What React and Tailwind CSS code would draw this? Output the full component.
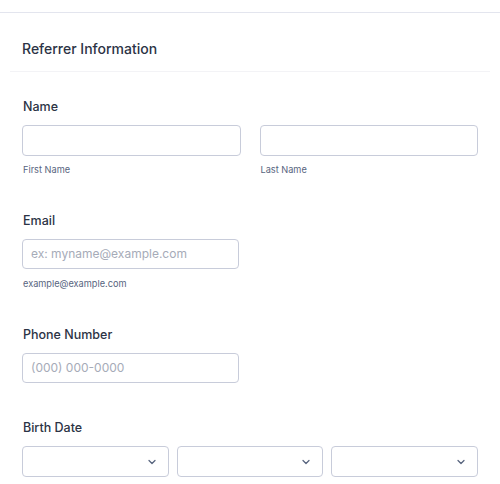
import { ChevronDown } from 'lucide-react';

function DateSelect() {
  return (
    <div className="relative h-[31px] rounded-[4px] border border-[#c8ccda] bg-white">
      <ChevronDown className="absolute right-[10px] top-[9px] w-[12px] h-[12px] text-[#57647e]" strokeWidth={2.5} />
    </div>
  );
}

export default function App() {
  return (
    <div className="min-h-screen bg-white font-['Inter',sans-serif] text-[#2c3345]">
      <div className="h-[13px] border-b border-[#e3e5ee]" />

      {/* header */}
      <div className="mx-[10px] border-b border-[#f3f3f6] px-[12px] pt-[26px] pb-[12px]">
        <h2 className="text-[14px] font-medium leading-[20px]">Referrer Information</h2>
      </div>

      <div className="px-[22px]">
        {/* name */}
        <div className="pt-[25px]">
          <label className="block text-[12.5px] font-medium leading-[20px] ml-[1px]">Name</label>
          <div className="mt-[8px] grid grid-cols-2 gap-[19px]">
            <div>
              <div className="h-[31px] rounded-[4px] border border-[#c8ccda]" />
              <div className="mt-[7px] ml-[1px] text-[9.2px] leading-[14px] text-[#57647e]">First Name</div>
            </div>
            <div>
              <div className="h-[31px] rounded-[4px] border border-[#c8ccda]" />
              <div className="mt-[7px] ml-[1px] text-[9.2px] leading-[14px] text-[#57647e]">Last Name</div>
            </div>
          </div>
        </div>

        {/* email */}
        <div className="pt-[34px]">
          <label className="block text-[12.5px] font-medium leading-[20px] ml-[1px]">Email</label>
          <div className="mt-[8px] w-[217px]">
            <div className="flex h-[30px] items-center rounded-[4px] border border-[#c8ccda] px-[8px] text-[12px] text-[#a6abb8]">
              ex: myname@example.com
            </div>
            <div className="mt-[8px] ml-[1px] text-[9.2px] leading-[14px] text-[#57647e]">example@example.com</div>
          </div>
        </div>

        {/* phone */}
        <div className="pt-[34px]">
          <label className="block text-[12.5px] font-medium leading-[20px] ml-[1px]">Phone Number</label>
          <div className="mt-[8px] w-[217px]">
            <div className="flex h-[30px] items-center rounded-[4px] border border-[#c8ccda] px-[8px] text-[12px] text-[#a6abb8]">
              (000) 000-0000
            </div>
          </div>
        </div>

        {/* birth date */}
        <div className="pt-[35px]">
          <label className="block text-[12.5px] font-medium leading-[20px] ml-[1px]">Birth Date</label>
          <div className="mt-[8px] grid grid-cols-3 gap-[8px]">
            <DateSelect />
            <DateSelect />
            <DateSelect />
          </div>
        </div>
      </div>
    </div>
  );
}
